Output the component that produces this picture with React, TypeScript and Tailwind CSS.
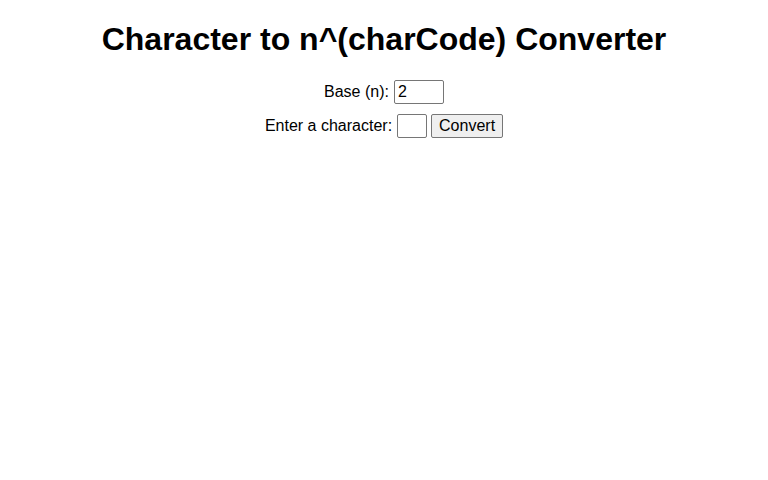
import * as React from "react";

export default function App() {
    const [base, setBase] = React.useState("2");
    const [ch, setCh] = React.useState("");

    return (
        <div className="min-h-screen bg-white px-2 pt-[21px] text-center font-['Liberation_Sans',Arial,sans-serif] text-[16px] leading-[normal] text-black">
            <h1 className="mb-[22px] text-[32px] font-bold leading-[normal]">
                Character to n^(charCode) Converter
            </h1>

            <div className="flex flex-col items-center gap-[10px]">
                <div className="flex h-[24px] items-center justify-center gap-[5px]">
                    <label htmlFor="base">Base (n):</label>
                    <input
                        id="base"
                        type="text"
                        value={base}
                        onChange={(e) => setBase(e.target.value)}
                        className="h-[24px] w-[50px] rounded-[2px] border border-[#767676] bg-white px-[3px] text-[16px] outline-none"
                    />
                </div>

                <div className="flex h-[24px] items-center justify-center">
                    <label htmlFor="char">Enter a character:</label>
                    <input
                        id="char"
                        type="text"
                        maxLength={1}
                        value={ch}
                        onChange={(e) => setCh(e.target.value)}
                        className="ml-[5px] h-[24px] w-[30px] rounded-[2px] border border-[#767676] bg-white px-[3px] text-[16px] outline-none"
                    />
                    <button className="ml-[4px] h-[24px] w-[72px] rounded-[2px] border border-[#767676] bg-[#efefef] text-[16px]">
                        Convert
                    </button>
                </div>
            </div>
        </div>
    );
}
